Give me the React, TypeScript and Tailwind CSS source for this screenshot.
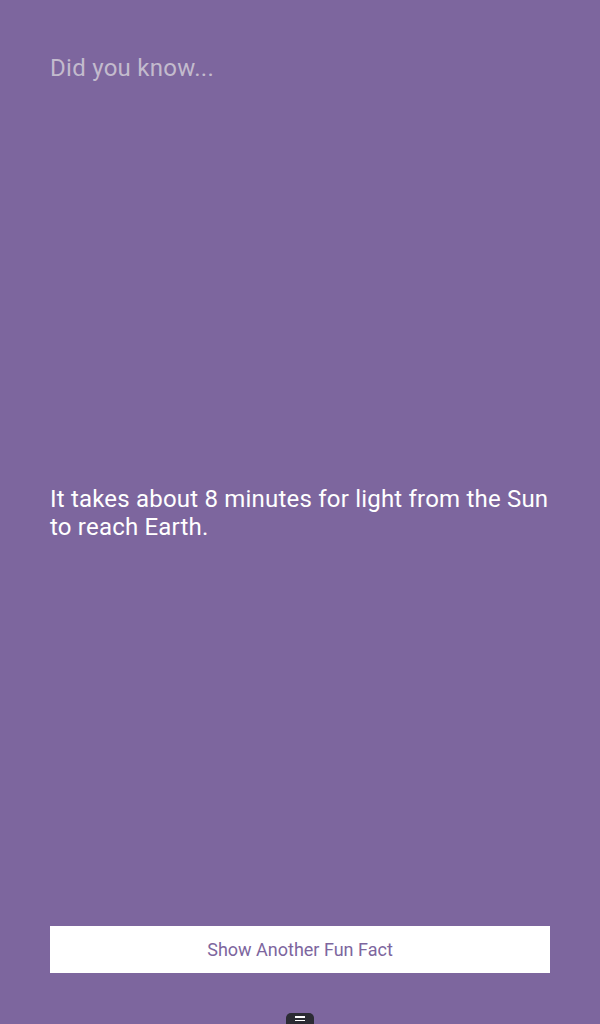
export default function App() {
  return (
    <div className="relative flex h-[1024px] w-[600px] flex-col bg-[#7d669e] px-[50px] pt-[52px] font-['Roboto',sans-serif]">
      <p className="text-[24px] leading-[32px] tracking-[0.28px] text-[#c3bbcd]">Did you know...</p>

      <div className="-mr-[10px] flex flex-1 items-center pt-[15px]">
        <p className="text-[24px] leading-[28px] tracking-[0.2px] text-white">
          It takes about 8 minutes for light from the Sun to reach Earth.
        </p>
      </div>

      <button className="mb-[51px] h-[47px] w-full bg-white text-[18px] text-[#7d669e]">
        Show Another Fun Fact
      </button>

      {/* soft menu key peeking from the bottom edge */}
      <div className="absolute bottom-0 left-[286px] flex h-[11px] w-[28px] flex-col items-center justify-center gap-[2px] rounded-t-[5px] bg-[#2b2b33]">
        <span className="h-[1.5px] w-[10px] bg-white" />
        <span className="h-[1.5px] w-[10px] bg-white" />
      </div>
    </div>
  );
}
